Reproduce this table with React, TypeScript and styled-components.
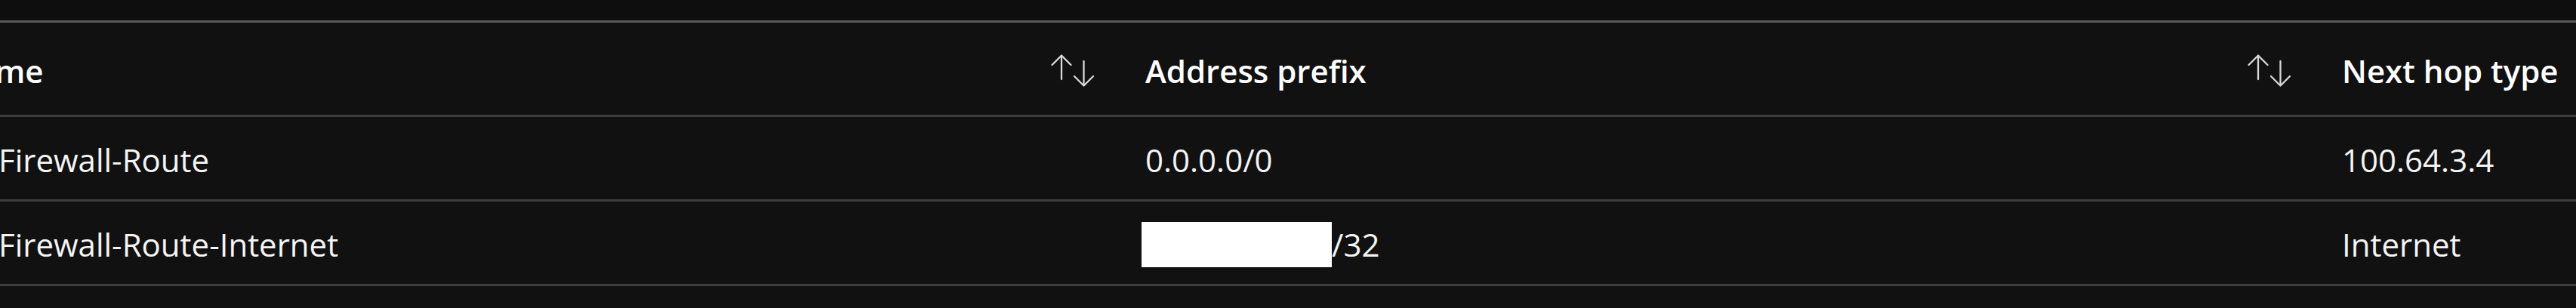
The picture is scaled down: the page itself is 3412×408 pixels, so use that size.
import React from "react";
import styled, { createGlobalStyle } from "styled-components";

const Global = createGlobalStyle`
  html, body {
    margin: 0;
    padding: 0;
    background: #111111;
  }
  body {
    font-family: "Open Sans", "Noto Sans", sans-serif;
    color: #ffffff;
    overflow: hidden;
  }
`;

const Page = styled.div`
  width: 3412px;
  height: 408px;
  overflow: hidden;
  background: #111111;
`;

const TopBand = styled.div`
  height: 27px;
  background: #0e0e0e;
`;

const Table = styled.div`
  margin-left: -34px;
  border-top: 3px solid #5a5a5a;
`;

const Row = styled.div<{ $header?: boolean }>`
  display: grid;
  grid-template-columns: 1519px 1585px 900px;
  height: ${(p) => (p.$header ? "122px" : "109px")};
  border-bottom: 3px solid #3e3e3e;
  box-sizing: content-box;
`;

const HeaderCell = styled.div`
  display: flex;
  align-items: center;
  justify-content: space-between;
  padding: 4px 35px 0 32px;
  font-size: 42px;
  font-weight: 600;
  color: #ffffff;
  white-space: nowrap;
`;

const HeaderLabel = styled.span<{ $shift?: number }>`
  margin-left: ${(p) => p.$shift ?? 0}px;
`;

const Cell = styled.div`
  display: flex;
  align-items: center;
  padding: 4px 35px 0 32px;
  font-size: 42px;
  font-weight: 400;
  color: #f4f4f4;
  white-space: nowrap;
`;

const Redacted = styled.span`
  display: inline-block;
  width: 252px;
  height: 60px;
  background: #ffffff;
  margin-left: -5px;
`;

const SortIcon = () => (
  <svg width="58" height="43" viewBox="0 0 58 43" fill="none" stroke="#d8d8d8" strokeWidth="2.3" strokeLinecap="round" strokeLinejoin="round">
    <path d="M14 2 V33" />
    <path d="M1.5 14 L14 1.5 L26.5 14" />
    <path d="M43.5 9 V41" />
    <path d="M31 29 L43.5 41.5 L56 29" />
  </svg>
);

const columns: { label: string; shift?: number }[] = [
  { label: "Name", shift: -62 },
  { label: "Address prefix" },
  { label: "Next hop type" },
];

const rows: { name: string; prefix: React.ReactNode; hop: string }[] = [
  { name: "Firewall-Route", prefix: "0.0.0.0/0", hop: "100.64.3.4" },
  {
    name: "Firewall-Route-Internet",
    prefix: (
      <>
        <Redacted />
        /32
      </>
    ),
    hop: "Internet",
  },
];

export default function App() {
  return (
    <Page>
      <Global />
      <TopBand />
      <Table>
        <Row $header>
          {columns.map((c) => (
            <HeaderCell key={c.label}>
              <HeaderLabel $shift={c.shift}>{c.label}</HeaderLabel>
              <SortIcon />
            </HeaderCell>
          ))}
        </Row>
        {rows.map((r) => (
          <Row key={r.name}>
            <Cell>{r.name}</Cell>
            <Cell>{r.prefix}</Cell>
            <Cell>{r.hop}</Cell>
          </Row>
        ))}
      </Table>
    </Page>
  );
}
